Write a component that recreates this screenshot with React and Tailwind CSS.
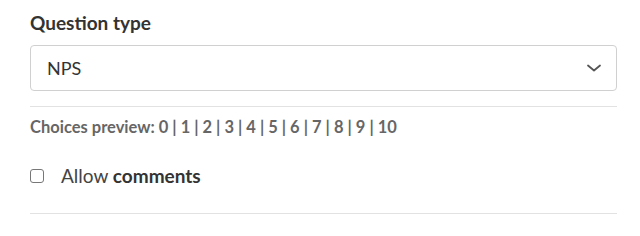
export default function App() {
  const choices = Array.from({ length: 11 }, (_, i) => i).join(' | ');
  return (
    <div className="w-[640px] h-[236px] bg-white font-['Lato',sans-serif] text-[#333]">
      <div className="pl-[30px] pr-[23px] pt-[10px]">
        <div className="text-[19px] font-bold leading-[26px]">Question type</div>
        <div className="mt-[9px] h-[46px] rounded-[4px] border border-[#d0d0d0] flex items-center justify-between pl-[16px] pr-[14px]">
          <span className="text-[18px] text-[#333]">NPS</span>
          <svg width="16" height="16" viewBox="0 0 16 16" fill="none" className="text-[#555]">
            <path d="M2 5.5L8 10.5L14 5.5" stroke="currentColor" strokeWidth="1.8" strokeLinecap="round" strokeLinejoin="round" />
          </svg>
        </div>
        <div className="mt-[15px] border-t border-[#e2e2e2]" />
        <div className="mt-[10px] text-[16.5px] font-bold text-[#666] leading-[20px]">
          Choices preview: {choices}
        </div>
        <label className="mt-[27px] flex items-center gap-[17px]">
          <span className="w-[14px] h-[14px] rounded-[3px] border border-[#777] bg-white" />
          <span className="text-[19px] leading-[24px] text-[#444]">
            Allow <span className="font-bold text-[#333]">comments</span>
          </span>
        </label>
        <div className="mt-[25px] border-t border-[#e2e2e2]" />
      </div>
    </div>
  );
}
